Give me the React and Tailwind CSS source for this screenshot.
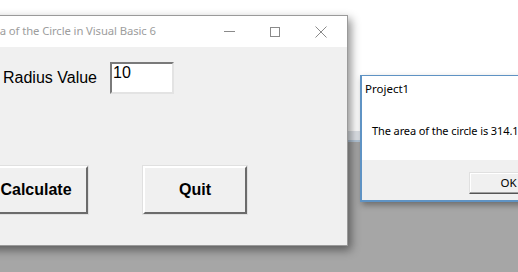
import React from "react";

const segoe = { fontFamily: '"Noto Sans", "Open Sans", sans-serif' };

const MainWindow = () => {
  return (
    <div className="absolute left-[-30px] top-[15px] w-[378px] h-[231px] flex flex-col border border-[#9a9a9a] bg-[#f0f0f0] shadow-[3px_4px_9px_rgba(0,0,0,0.45)]">
      {/* title bar */}
      <div className="h-[31px] bg-white flex items-center shrink-0">
        <span className="pl-[11px] text-[11.3px] text-[#9d9d9d] tracking-[-0.1px]" style={segoe}>
          Area of the Circle in Visual Basic 6
        </span>
        <div className="ml-auto flex items-center h-full text-[#8a8a8a]">
          <div className="w-[46px] flex justify-center">
            <div className="w-[11px] h-px bg-[#8a8a8a]" />
          </div>
          <div className="w-[46px] flex justify-center">
            <div className="w-[10px] h-[10px] border border-[#8a8a8a]" />
          </div>
          <div className="w-[46px] flex justify-center">
            <svg width="12" height="12" viewBox="0 0 12 12">
              <path d="M0.5 0.5 L11.5 11.5 M11.5 0.5 L0.5 11.5" stroke="#8a8a8a" strokeWidth="1" fill="none" />
            </svg>
          </div>
          <div className="w-[3px]" />
        </div>
      </div>

      {/* form body */}
      <div className="flex flex-col" style={{ fontFamily: '"Liberation Sans", Arial, sans-serif' }}>
        <div className="flex items-center pl-[32px] pt-[15px] gap-[13px]">
          <span className="text-[16px] text-black">Radius Value</span>
          <div className="w-[64px] h-[32px] bg-white border-2 border-t-[#7a7a7a] border-l-[#7a7a7a] border-r-[#e3e3e3] border-b-[#e3e3e3] pl-[1px] text-[16px] leading-[18px]">
            10
          </div>
        </div>
        <div className="flex pl-[13px] pt-[72px] gap-[55px]">
          <button className="w-[104px] h-[48px] bg-[#f0f0f0] border-2 border-t-white border-l-white border-r-[#6b6b6b] border-b-[#6b6b6b] shadow-[0_0_0_1px_#e0e0e0] text-[16px] font-bold text-black">
            Calculate
          </button>
          <button className="w-[104px] h-[48px] bg-[#f0f0f0] border-2 border-t-white border-l-white border-r-[#6b6b6b] border-b-[#6b6b6b] shadow-[0_0_0_1px_#e0e0e0] text-[16px] font-bold text-black">
            Quit
          </button>
        </div>
      </div>
    </div>
  );
};

const MessageBox = () => {
  return (
    <div className="absolute left-[360px] top-[75px] w-[200px] h-[127px] flex flex-col border-2 border-t border-[#5f93c4] shadow-[2px_3px_6px_rgba(0,0,0,0.35)]" style={segoe}>
      <div className="h-[84px] bg-white flex flex-col">
        <span className="pl-[3px] pt-[5px] text-[11.5px] text-black leading-[16px]">Project1</span>
        <span className="pl-[10px] pt-[26px] text-[11px] text-black leading-[16px] tracking-[-0.1px] whitespace-nowrap">
          The area of the circle is 314.159
        </span>
      </div>
      <div className="flex-1 bg-[#f0f0f0] pl-[107px] pt-[9px]">
        <button className="w-[75px] h-[22px] bg-[#f0f0f0] border border-t-[#e0e0e0] border-l-[#e0e0e0] border-r-[#555] border-b-[#555] shadow-[inset_-1px_-1px_#a0a0a0,inset_1px_1px_white] text-[11.5px] text-black">
          <span className="pl-[4px]">OK</span>
        </button>
      </div>
    </div>
  );
};

export default function App() {
  return (
    <div className="relative w-[518px] h-[272px] overflow-hidden bg-[#a6a6a6]">
      {/* desktop behind */}
      <div className="flex flex-col h-full">
        <div className="h-[131px] bg-white" />
        <div className="h-[11px] bg-[#dfe3e8] border-b-2 border-[#b5c7d8]" />
        <div className="flex-1 bg-[#a6a6a6]" />
      </div>
      <MainWindow />
      <MessageBox />
    </div>
  );
}
